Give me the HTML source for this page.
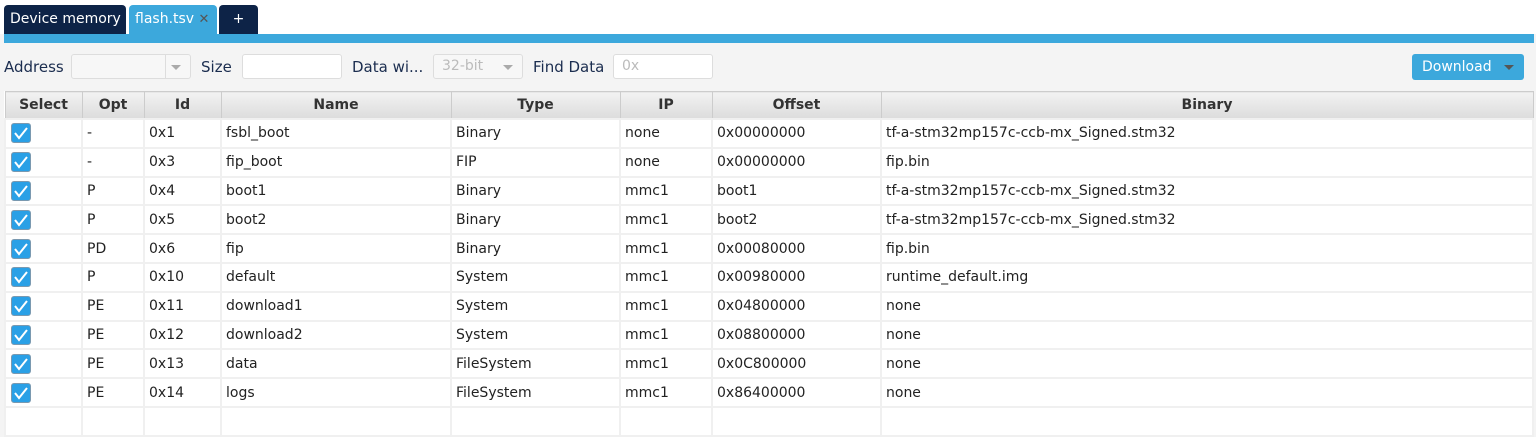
<!DOCTYPE html><html><head><style>
body{margin:0;width:1536px;height:409px;overflow:hidden;background:#f4f4f4;font-family:"DejaVu Sans","Liberation Sans",sans-serif;font-size:14px;color:#222;position:relative}
.top{position:absolute;left:0;top:0;width:1536px;height:34px;background:#fff}
.tab{position:absolute;top:5px;height:29px;border-radius:4px 4px 0 0;color:#fff;font-size:14px;line-height:29px;padding-left:6px;box-sizing:border-box;white-space:nowrap;overflow:hidden}
.bar{position:absolute;left:4px;top:34px;width:1530px;height:9px;background:#3ca8dc}
.lbl{position:absolute;top:58px;font-size:15px;color:#1b2d4f}
.inp{position:absolute;top:54px;height:25px;border:1px solid #ddd;border-radius:3px;background:#f7f7f7;box-sizing:border-box;font-size:14px;color:#bbb;line-height:23px;padding-left:8px}
.arr{position:absolute;width:0;height:0;border-left:5px solid transparent;border-right:5px solid transparent;border-top:5px solid #aaa}
table{position:absolute;left:4px;top:91px;border-collapse:collapse;width:1530px;table-layout:fixed;background:#fff}
th{height:26px;background:linear-gradient(#f2f2f2,#dcdcdc);border:1px solid #ccc;font-weight:bold;font-size:14px;color:#333;padding:0}
td{height:26.8px;border:2px solid #f0f0f0;padding:0 0 0 4px;font-size:14px;white-space:nowrap;overflow:hidden}
.cb{display:inline-block;width:20px;height:20px;background:#2aa0e6;border:1px solid #7a99b0;border-radius:3px;vertical-align:middle;box-sizing:border-box;position:relative;margin-left:1px}
</style></head><body>
<div class="top"></div>
<div class="tab" style="left:4px;width:122px;background:#0d2347">Device memory</div>
<div class="tab" style="left:129px;width:88px;background:#3ca8dc">flash.tsv <span style="color:#555;font-size:13px">✕</span></div>
<div class="tab" style="left:219px;width:39px;background:#0d2347;text-align:center;padding:0">+</div>
<div class="bar"></div>
<div class="lbl" style="left:4px">Address</div>
<div class="inp" style="left:71px;width:120px"></div><div class="arr" style="left:171px;top:65px"></div>
<div style="position:absolute;left:165px;top:55px;width:1px;height:23px;background:#ddd"></div>
<div class="lbl" style="left:201px">Size</div>
<div class="inp" style="left:242px;width:100px;background:#fff"></div>
<div class="lbl" style="left:352px">Data wi...</div>
<div class="inp" style="left:433px;width:90px">32-bit</div><div class="arr" style="left:503px;top:65px"></div>
<div class="lbl" style="left:533px">Find Data</div>
<div class="inp" style="left:613px;width:100px;background:#fff">0x</div>
<div style="position:absolute;left:1412px;top:54px;width:112px;height:26px;background:#3ca8dc;border-radius:3px;color:#fff;font-size:14px;line-height:26px;padding-left:10px;box-sizing:border-box">Download</div>
<div class="arr" style="left:1504px;top:65px;border-top-color:#555"></div>
<table>
<colgroup><col style="width:77px"><col style="width:62px"><col style="width:77px"><col style="width:230px"><col style="width:169px"><col style="width:92px"><col style="width:169px"><col></colgroup>
<tr><th>Select</th><th>Opt</th><th>Id</th><th>Name</th><th>Type</th><th>IP</th><th>Offset</th><th>Binary</th></tr>
<tr><td><span class="cb"><svg width="18" height="18" style="position:absolute;left:0;top:0"><path d="M3 9l4 5 8-10" stroke="#fff" stroke-width="2" fill="none"/></svg></span></td><td>-</td><td>0x1</td><td>fsbl_boot</td><td>Binary</td><td>none</td><td>0x00000000</td><td>tf-a-stm32mp157c-ccb-mx_Signed.stm32</td></tr>
<tr><td><span class="cb"><svg width="18" height="18" style="position:absolute;left:0;top:0"><path d="M3 9l4 5 8-10" stroke="#fff" stroke-width="2" fill="none"/></svg></span></td><td>-</td><td>0x3</td><td>fip_boot</td><td>FIP</td><td>none</td><td>0x00000000</td><td>fip.bin</td></tr>
<tr><td><span class="cb"><svg width="18" height="18" style="position:absolute;left:0;top:0"><path d="M3 9l4 5 8-10" stroke="#fff" stroke-width="2" fill="none"/></svg></span></td><td>P</td><td>0x4</td><td>boot1</td><td>Binary</td><td>mmc1</td><td>boot1</td><td>tf-a-stm32mp157c-ccb-mx_Signed.stm32</td></tr>
<tr><td><span class="cb"><svg width="18" height="18" style="position:absolute;left:0;top:0"><path d="M3 9l4 5 8-10" stroke="#fff" stroke-width="2" fill="none"/></svg></span></td><td>P</td><td>0x5</td><td>boot2</td><td>Binary</td><td>mmc1</td><td>boot2</td><td>tf-a-stm32mp157c-ccb-mx_Signed.stm32</td></tr>
<tr><td><span class="cb"><svg width="18" height="18" style="position:absolute;left:0;top:0"><path d="M3 9l4 5 8-10" stroke="#fff" stroke-width="2" fill="none"/></svg></span></td><td>PD</td><td>0x6</td><td>fip</td><td>Binary</td><td>mmc1</td><td>0x00080000</td><td>fip.bin</td></tr>
<tr><td><span class="cb"><svg width="18" height="18" style="position:absolute;left:0;top:0"><path d="M3 9l4 5 8-10" stroke="#fff" stroke-width="2" fill="none"/></svg></span></td><td>P</td><td>0x10</td><td>default</td><td>System</td><td>mmc1</td><td>0x00980000</td><td>runtime_default.img</td></tr>
<tr><td><span class="cb"><svg width="18" height="18" style="position:absolute;left:0;top:0"><path d="M3 9l4 5 8-10" stroke="#fff" stroke-width="2" fill="none"/></svg></span></td><td>PE</td><td>0x11</td><td>download1</td><td>System</td><td>mmc1</td><td>0x04800000</td><td>none</td></tr>
<tr><td><span class="cb"><svg width="18" height="18" style="position:absolute;left:0;top:0"><path d="M3 9l4 5 8-10" stroke="#fff" stroke-width="2" fill="none"/></svg></span></td><td>PE</td><td>0x12</td><td>download2</td><td>System</td><td>mmc1</td><td>0x08800000</td><td>none</td></tr>
<tr><td><span class="cb"><svg width="18" height="18" style="position:absolute;left:0;top:0"><path d="M3 9l4 5 8-10" stroke="#fff" stroke-width="2" fill="none"/></svg></span></td><td>PE</td><td>0x13</td><td>data</td><td>FileSystem</td><td>mmc1</td><td>0x0C800000</td><td>none</td></tr>
<tr><td><span class="cb"><svg width="18" height="18" style="position:absolute;left:0;top:0"><path d="M3 9l4 5 8-10" stroke="#fff" stroke-width="2" fill="none"/></svg></span></td><td>PE</td><td>0x14</td><td>logs</td><td>FileSystem</td><td>mmc1</td><td>0x86400000</td><td>none</td></tr>
<tr><td></td><td></td><td></td><td></td><td></td><td></td><td></td><td></td></tr>
</table>
</body></html>
